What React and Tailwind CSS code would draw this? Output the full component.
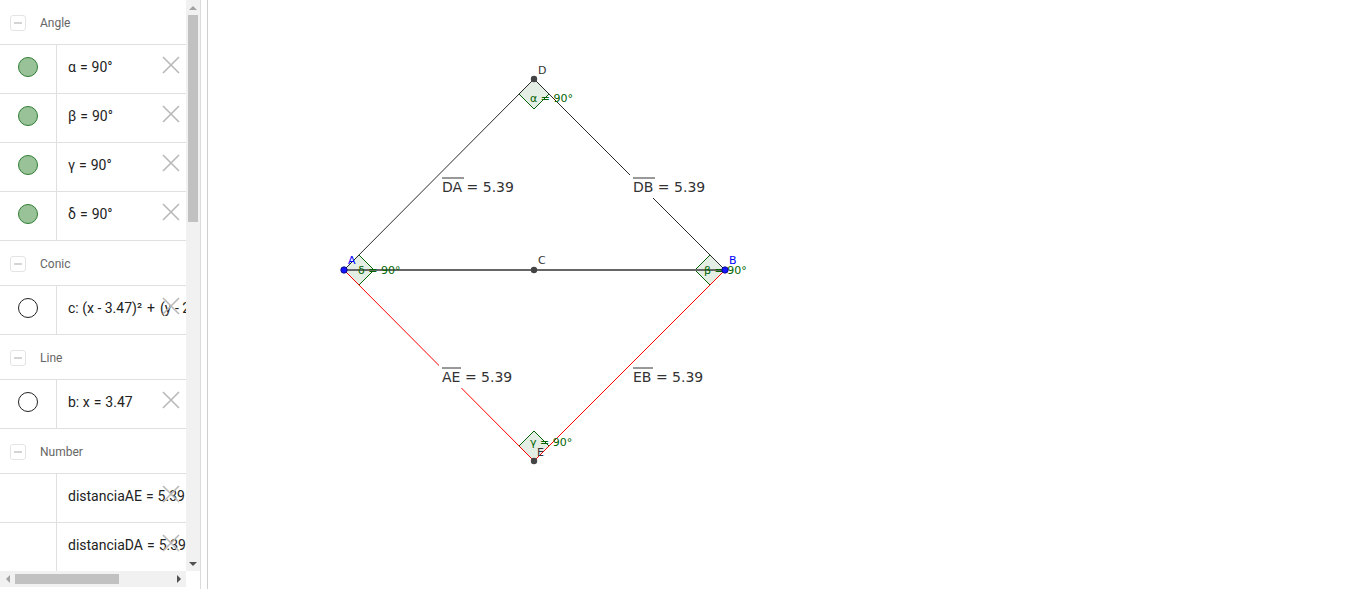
import React from "react";

const XIcon = () => (
  <svg width="18" height="18" viewBox="0 0 18 18" className="absolute left-[162px] top-[11px]">
    <path d="M1 1 L17 17 M17 1 L1 17" stroke="#b8b8b8" strokeWidth="1.6" fill="none" />
  </svg>
);

const Header = ({ label }) => (
  <div className="h-[45px] border-b border-[#e0e0e0] flex items-center shrink-0 pt-[2px]">
    <div className="ml-[10px] w-[16px] h-[16px] rounded-[3px] border border-[#e4e4e4] flex items-center justify-center">
      <div className="w-[8px] h-[2px] bg-[#d4d4d4]" />
    </div>
    <span className="ml-[14px] text-[12px] text-[#666]" style={{ fontFamily: "Roboto, sans-serif" }}>{label}</span>
  </div>
);

const Eq = () => <span className="mx-[4px]">=</span>;

const Row = ({ marker, children }) => (
  <div className="h-[49px] border-b border-[#e0e0e0] flex shrink-0 relative overflow-hidden">
    <div className="w-[57px] border-r border-[#e0e0e0] flex items-center justify-center shrink-0 pb-[4px]">
      {marker === "green" && (
        <div className="w-[20px] h-[20px] rounded-full bg-[#99c299] border border-[#2e7d32]" />
      )}
      {marker === "empty" && (
        <div className="w-[20px] h-[20px] rounded-full bg-white border border-[#222]" />
      )}
    </div>
    <div className="flex items-center pl-[11px] pb-[4px] text-[14px] text-[#222] whitespace-nowrap" style={{ fontFamily: "Roboto, sans-serif" }}>
      {children}
    </div>
    <XIcon />
  </div>
);

export default function App() {
  const seg = { fontFamily: "'DejaVu Sans', sans-serif", fontSize: 14, fill: "#333" };
  const ang = { fontFamily: "'DejaVu Sans', sans-serif", fontSize: 11, fill: "#006400" };
  const pt = { fontFamily: "'DejaVu Sans', sans-serif", fontSize: 11, fill: "#333" };
  const ptb = { fontFamily: "'DejaVu Sans', sans-serif", fontSize: 11, fill: "#0000ff" };
  const SegLabel = ({ x, y, a, w }) => (
    <g>
      <rect x={x - 3} y={y - 17} width={78} height={23} fill="#fff" />
      <line x1={x} y1={y - 14} x2={x + w} y2={y - 14} stroke="#333" strokeWidth="1" />
      <text x={x} y={y} style={seg}>{a} = 5.39</text>
    </g>
  );
  return (
    <div className="w-[1352px] h-[589px] flex bg-white overflow-hidden">
      <div className="w-[201px] h-[589px] flex flex-col border-r border-[#dcdcdc] shrink-0">
        <div className="flex h-[571px]">
          <div className="w-[186px] flex flex-col overflow-hidden">
            <Header label="Angle" />
            <Row marker="green">α<Eq />90°</Row>
            <Row marker="green">β<Eq />90°</Row>
            <Row marker="green">γ<Eq />90°</Row>
            <Row marker="green">δ<Eq />90°</Row>
            <Header label="Conic" />
            <Row marker="empty">c: (x - 3.47)²<span className="mx-[5px]">+</span>(y - 2.58)²<Eq />14.55</Row>
            <Header label="Line" />
            <Row marker="empty">b: x<Eq />3.47</Row>
            <Header label="Number" />
            <Row marker="none">distanciaAE<Eq />5.39</Row>
            <Row marker="none">distanciaDA<Eq />5.39</Row>
          </div>
          <div className="w-[14px] bg-[#f1f1f1] flex flex-col items-center relative">
            <div className="h-[15px] flex items-center justify-center">
              <div className="w-0 h-0 border-l-[4px] border-r-[4px] border-b-[4px] border-l-transparent border-r-transparent border-b-[#a3a3a3]" />
            </div>
            <div className="w-[10px] h-[207px] bg-[#c1c1c1]" />
            <div className="flex-1" />
            <div className="h-[15px] flex items-center justify-center">
              <div className="w-0 h-0 border-l-[4px] border-r-[4px] border-t-[4px] border-l-transparent border-r-transparent border-t-[#505050]" />
            </div>
          </div>
        </div>
        <div className="h-[16px] w-[186px] bg-[#f1f1f1] flex items-center">
          <div className="w-[15px] flex items-center justify-center">
            <div className="w-0 h-0 border-t-[4px] border-b-[4px] border-r-[4px] border-t-transparent border-b-transparent border-r-[#a3a3a3]" />
          </div>
          <div className="w-[104px] h-[10px] bg-[#c1c1c1]" />
          <div className="flex-1" />
          <div className="w-[15px] flex items-center justify-center">
            <div className="w-0 h-0 border-t-[4px] border-b-[4px] border-l-[4px] border-t-transparent border-b-transparent border-l-[#505050]" />
          </div>
        </div>
      </div>
      <div className="w-[6px] shrink-0" />
      <div className="flex-1 border-l border-[#cfcfcf] relative">
        <svg width="1144" height="589" viewBox="208 0 1144 589" className="block">
          {/* angle markers */}
          <polygon points="534,79 519,94 534,109 549,94" fill="#e5eee5" stroke="#006400" strokeWidth="1" />
          <polygon points="344,270 359,255 374,270 359,285" fill="#e5eee5" stroke="#006400" strokeWidth="1" />
          <polygon points="725,270 710,255 695,270 710,285" fill="#e5eee5" stroke="#006400" strokeWidth="1" />
          <polygon points="534,461 519,446 534,431 549,446" fill="#e5eee5" stroke="#006400" strokeWidth="1" />
          {/* top segments */}
          <line x1="344" y1="270" x2="534" y2="79" stroke="#2a2a2a" strokeWidth="1" />
          <line x1="534" y1="79" x2="725" y2="270" stroke="#2a2a2a" strokeWidth="1" />
          {/* bottom segments */}
          <line x1="344" y1="270" x2="534" y2="461" stroke="#ff0000" strokeWidth="1" />
          <line x1="534" y1="461" x2="725" y2="270" stroke="#ff0000" strokeWidth="1" />
          {/* AB */}
          <line x1="344" y1="270" x2="725" y2="270" stroke="#666" strokeWidth="2" />
          {/* segment labels */}
          <SegLabel x={442} y={192} a="DA" w={22} />
          <SegLabel x={633} y={192} a="DB" w={22} />
          <SegLabel x={442} y={382} a="AE" w={19} />
          <SegLabel x={633} y={382} a="EB" w={20} />
          {/* angle labels */}
          <text x="530" y="102" style={ang}>α = 90°</text>
          <text x="358" y="274" style={ang}>δ = 90°</text>
          <text x="704" y="274" style={ang}>β = 90°</text>
          <text x="530" y="446" style={ang}>γ = 90°</text>
          {/* points */}
          <circle cx="534" cy="79" r="3.2" fill="#444" />
          <circle cx="534" cy="270" r="3.2" fill="#444" />
          <circle cx="534" cy="461" r="3.2" fill="#444" />
          <circle cx="344" cy="270" r="3.2" fill="#1515ff" stroke="#00006e" strokeWidth="0.8" />
          <circle cx="725" cy="270" r="3.2" fill="#1515ff" stroke="#00006e" strokeWidth="0.8" />
          <text x="538" y="74" style={pt}>D</text>
          <text x="538" y="264" style={pt}>C</text>
          <text x="348" y="264" style={ptb}>A</text>
          <text x="729" y="264" style={ptb}>B</text>
          <text x="537" y="456" style={pt}>E</text>
        </svg>
      </div>
    </div>
  );
}
